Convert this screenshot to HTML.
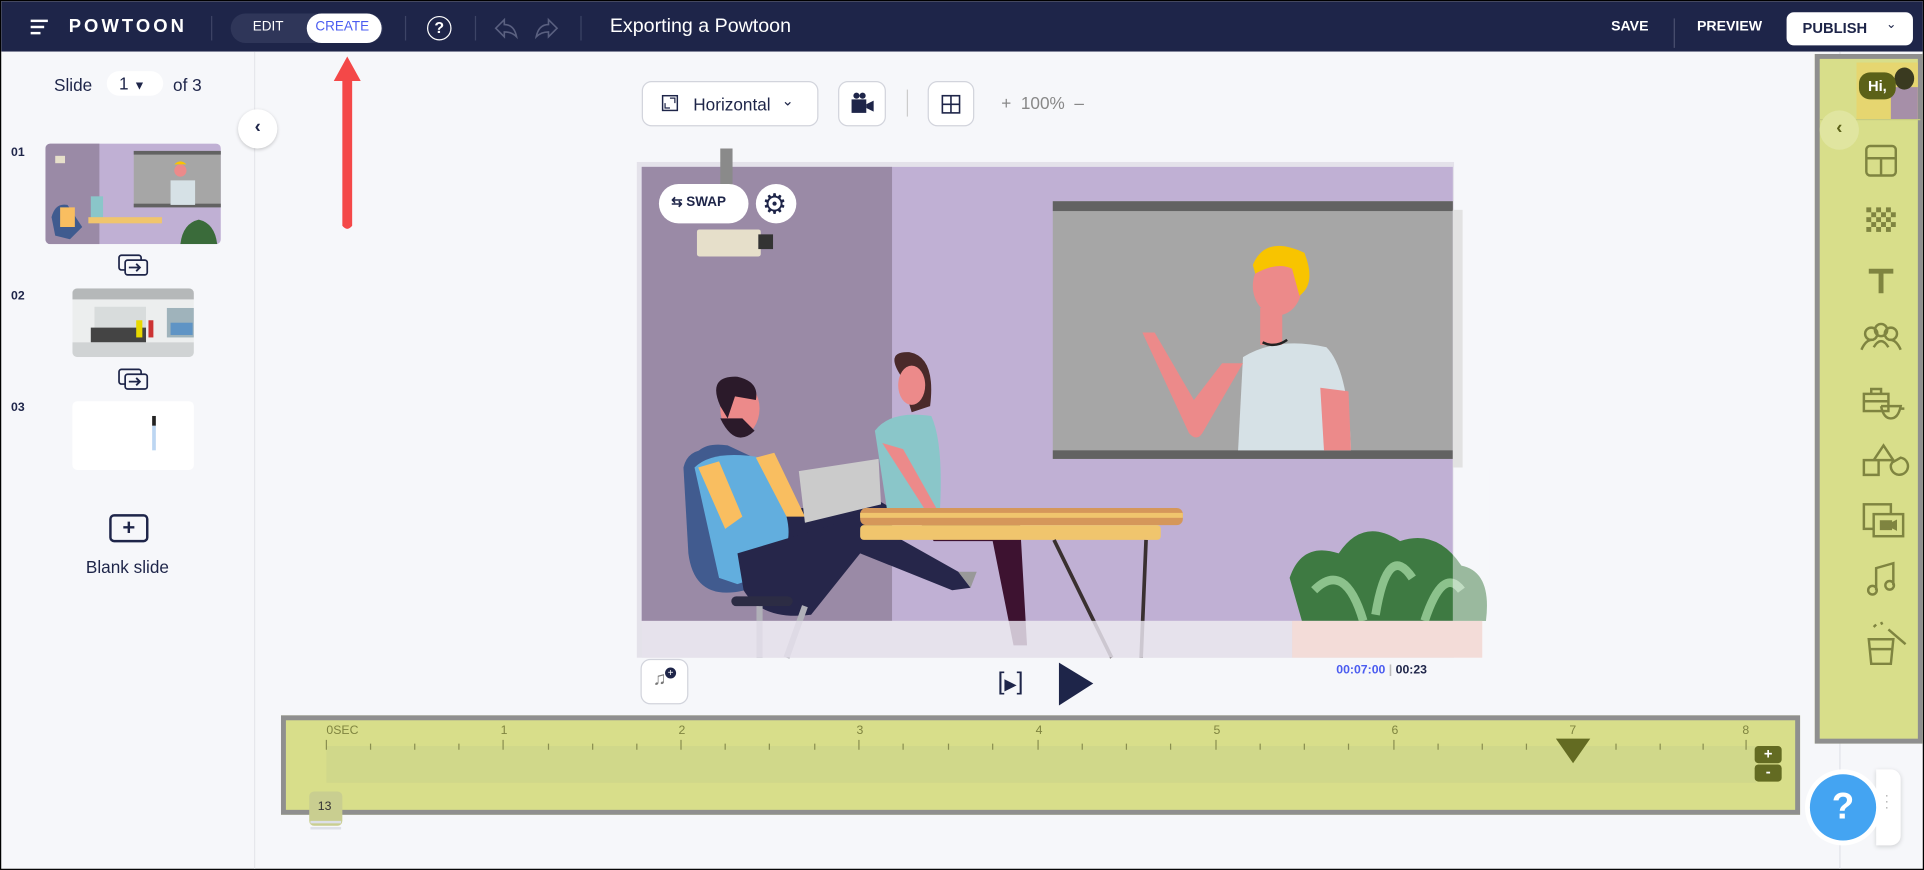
<!DOCTYPE html>
<html><head><meta charset="utf-8">
<style>
*{margin:0;padding:0;box-sizing:border-box}
html,body{width:1924px;height:870px;overflow:hidden;background:#000}
#w{position:absolute;left:0;top:0;width:1568px;height:709px;transform:scale(1.22704);transform-origin:0 0;background:#f6f7fa;font-family:"Liberation Sans",sans-serif;border:1.5px solid #000;overflow:hidden}
.a{position:absolute}
.hdr{left:0;top:0;width:1568px;height:41px;background:#1e2549;color:#fff}
.t{white-space:nowrap}
</style></head><body><div id="w">
<!-- header -->
<div class="a hdr">
 <div class="a" style="left:24px;top:15px;width:14px;height:2px;background:#fff"></div>
 <div class="a" style="left:24px;top:20px;width:11px;height:2px;background:#fff"></div>
 <div class="a" style="left:24px;top:25px;width:8px;height:2px;background:#fff"></div>
 <div class="a t" style="left:55px;top:12px;font-size:15px;font-weight:bold;letter-spacing:2.5px">POWTOON</div>
 <div class="a" style="left:171px;top:12px;width:1px;height:20px;background:#3d4466"></div>
 <div class="a" style="left:187px;top:10px;width:124px;height:24px;border-radius:12px;background:#2f3659"></div>
 <div class="a t" style="left:205px;top:15px;font-size:11px">EDIT</div>
 <div class="a" style="left:249px;top:10px;width:61px;height:24px;border-radius:12px;background:#fff"></div>
 <div class="a t" style="left:256px;top:15px;font-size:11px;color:#4b5cf0">CREATE</div>
 <div class="a" style="left:329px;top:12px;width:1px;height:20px;background:#3d4466"></div>
 <div class="a" style="left:347px;top:12px;width:20px;height:20px;border:1.7px solid #fff;border-radius:50%;text-align:center;font-size:13px;font-weight:bold;line-height:17px">?</div>
 <div class="a" style="left:386px;top:12px;width:1px;height:20px;background:#3d4466"></div>
 <svg class="a" style="left:400px;top:12px" width="60" height="20"><path d="M10 3 L3 10 L10 17 L10 13 Q16 13 20 17 Q18 7 10 7Z" fill="none" stroke="#5a6080" stroke-width="1.3"/><path d="M46 3 L53 10 L46 17 L46 13 Q40 13 36 17 Q38 7 46 7Z" fill="none" stroke="#5a6080" stroke-width="1.3"/></svg>
 <div class="a" style="left:472px;top:12px;width:1px;height:20px;background:#3d4466"></div>
 <div class="a t" style="left:496px;top:12px;font-size:16px">Exporting a Powtoon</div>
 <div class="a t" style="left:1312px;top:15px;font-size:11.5px;font-weight:bold">SAVE</div>
 <div class="a" style="left:1363px;top:14px;width:1px;height:24px;background:#4a5070"></div>
 <div class="a t" style="left:1382px;top:15px;font-size:11.5px;font-weight:bold">PREVIEW</div>
 <div class="a" style="left:1455px;top:9px;width:103px;height:27px;border-radius:6px;background:#fff"></div>
 <div class="a t" style="left:1468px;top:15px;font-size:12px;color:#1e2549;font-weight:bold">PUBLISH</div>
 <div class="a t" style="left:1536px;top:14px;font-size:10px;color:#1e2549">&#8964;</div>
</div>
<!-- red arrow -->
<svg class="a" style="left:266px;top:41px" width="32" height="150"><path d="M16 4 L5 24 L12 24 L12 142 Q16 147 20 142 L20 24 L27 24Z" fill="#f44848"/></svg>
<!-- left panel -->
<div class="a" style="left:206px;top:41px;width:1px;height:668px;background:#e6e7ec"></div>
<div class="a t" style="left:43px;top:60px;font-size:14px;color:#1e2549">Slide</div>
<div class="a" style="left:86px;top:57px;width:46px;height:20px;background:#fff;border-radius:10px"></div>
<div class="a t" style="left:96px;top:59px;font-size:14px;color:#1e2549">1 <span style="font-size:10px">&#9660;</span></div>
<div class="a t" style="left:140px;top:60px;font-size:14px;color:#1e2549">of 3</div>
<div class="a" style="left:193px;top:88px;width:32px;height:32px;border-radius:50%;background:#fff;box-shadow:0 1px 3px rgba(0,0,0,.2);text-align:center;line-height:30px;font-weight:bold;color:#1e2549;font-size:15px">&#8249;</div>
<div class="a t" style="left:8px;top:118px;font-size:10px;font-weight:bold;color:#1e2549">01</div>
<svg class="a" style="left:36px;top:116px;border-radius:4px" width="143" height="82" viewBox="0 0 143 82"><rect width="143" height="82" fill="#c0b0d4"/><rect width="44" height="82" fill="#9a8aa6"/><rect x="72" y="6" width="71" height="46" fill="#a6a6a6"/><rect x="72" y="6" width="71" height="3" fill="#626262"/><rect x="72" y="49" width="71" height="3" fill="#626262"/><rect x="102" y="30" width="20" height="20" fill="#d6e1e6"/><circle cx="110" cy="22" r="5" fill="#ec8a8a"/><path d="M105 17 Q110 12 115 17Z" fill="#f8c400"/><rect x="8" y="10" width="8" height="6" fill="#e6dfca"/><path d="M5 60 Q8 48 18 50 L30 68 L20 78 L8 75Z" fill="#3f5b8f"/><rect x="12" y="52" width="12" height="16" fill="#f9be60"/><rect x="37" y="43" width="10" height="18" fill="#8ac6c9"/><rect x="35" y="60" width="60" height="5" fill="#f0c56d"/><path d="M110 82 Q112 65 125 62 Q138 65 140 82Z" fill="#3a6b3a"/></svg>
<svg class="a" style="left:95px;top:206px" width="26" height="18"><rect x="1" y="1" width="18" height="12" rx="2" fill="none" stroke="#1e2549" stroke-width="1.4"/><rect x="6" y="5" width="18" height="12" rx="2" fill="#f6f7fa" stroke="#1e2549" stroke-width="1.4"/><path d="M9 11 H18 M15 8 L18 11 L15 14" stroke="#1e2549" stroke-width="1.5" fill="none"/></svg>
<div class="a t" style="left:8px;top:235px;font-size:10px;font-weight:bold;color:#1e2549">02</div>
<svg class="a" style="left:58px;top:234px;border-radius:4px" width="99" height="56" viewBox="0 0 99 56"><rect width="99" height="56" fill="#eceeee"/><rect width="99" height="9" fill="#b5b8b9"/><rect x="18" y="15" width="42" height="25" fill="#d8dcdc"/><rect x="77" y="16" width="22" height="24" fill="#9fb3bb"/><rect x="80" y="28" width="18" height="10" fill="#5f94c5"/><rect x="15" y="32" width="45" height="12" fill="#444"/><rect x="52" y="26" width="5" height="14" fill="#e8d900"/><rect x="62" y="26" width="4" height="14" fill="#c33"/><rect x="0" y="44" width="99" height="12" fill="#d0d3d4"/></svg>
<svg class="a" style="left:95px;top:299px" width="26" height="18"><rect x="1" y="1" width="18" height="12" rx="2" fill="none" stroke="#1e2549" stroke-width="1.4"/><rect x="6" y="5" width="18" height="12" rx="2" fill="#f6f7fa" stroke="#1e2549" stroke-width="1.4"/><path d="M9 11 H18 M15 8 L18 11 L15 14" stroke="#1e2549" stroke-width="1.5" fill="none"/></svg>
<div class="a t" style="left:8px;top:326px;font-size:10px;font-weight:bold;color:#1e2549">03</div>
<div class="a" style="left:58px;top:326px;width:99px;height:56px;background:#fff;border-radius:4px"></div>
<div class="a" style="left:123px;top:338px;width:3px;height:8px;background:#222"></div>
<div class="a" style="left:123px;top:346px;width:3px;height:20px;background:#bcd6f2"></div>
<div class="a" style="left:88px;top:418px;width:32px;height:23px;border:2px solid #1e2549;border-radius:4px;text-align:center;font-size:18px;font-weight:bold;line-height:18px;color:#1e2549">+</div>
<div class="a t" style="left:69px;top:453px;font-size:14px;color:#1e2549">Blank slide</div>
<!-- toolbar -->
<div class="a" style="left:522px;top:65px;width:144px;height:37px;border:1px solid #d2d4dc;border-radius:8px;background:#fff"></div>
<svg class="a" style="left:538px;top:76px" width="14" height="14"><rect x="1" y="1" width="12" height="12" fill="none" stroke="#1e2549" stroke-width="1.2"/><path d="M3 7 V11 H7 M11 7 V3 H7" stroke="#1e2549" fill="none"/></svg>
<div class="a t" style="left:564px;top:76px;font-size:14px;color:#1e2549">Horizontal</div>
<div class="a t" style="left:636px;top:74px;font-size:12px;color:#1e2549">&#8964;</div>
<div class="a" style="left:682px;top:65px;width:39px;height:37px;border:1px solid #d2d4dc;border-radius:8px;background:#fff"></div>
<svg class="a" style="left:692px;top:74px" width="20" height="18"><rect x="1" y="6" width="12" height="11" fill="#1e2549"/><path d="M13 10 L19 7 V16 L13 13Z" fill="#1e2549"/><circle cx="5" cy="3" r="2.5" fill="#1e2549"/><circle cx="10" cy="3" r="2.5" fill="#1e2549"/></svg>
<div class="a" style="left:738px;top:72px;width:1px;height:22px;background:#ccc"></div>
<div class="a" style="left:755px;top:65px;width:38px;height:37px;border:1px solid #d2d4dc;border-radius:8px;background:#fff"></div>
<svg class="a" style="left:766px;top:76px" width="16" height="16"><rect x="1" y="1" width="14" height="14" fill="none" stroke="#1e2549" stroke-width="1.3"/><path d="M8 1V15M1 8H15" stroke="#1e2549" stroke-width="1.3"/></svg>
<div class="a t" style="left:815px;top:75px;font-size:14px;color:#888">+ &nbsp;100% &nbsp;&#8211;</div>
<!-- canvas -->
<svg class="a" style="left:516px;top:120px" width="700" height="420" viewBox="516 120 700 420">
 <rect x="518" y="131" width="666" height="404" fill="#e4e2ea"/>
 <rect x="522" y="135" width="661" height="370" fill="#c0b0d4"/>
 <rect x="522" y="135" width="204" height="370" fill="#9a8aa6"/>
 <rect x="586" y="120" width="10" height="35" fill="#8a8a8a"/>
 <rect x="567" y="186" width="52" height="22" rx="2" fill="#e6dfca"/>
 <rect x="617" y="190" width="12" height="12" fill="#333"/>
 <rect x="857" y="163" width="326" height="210" fill="#a6a6a6"/>
 <rect x="857" y="163" width="326" height="8" fill="#626262"/>
 <rect x="857" y="366" width="326" height="7" fill="#626262"/>
 <rect x="1183" y="170" width="8" height="210" fill="#e2e2e2"/>
 <path d="M1008 366 L1012 290 Q1040 273 1080 282 Q1098 300 1100 366Z" fill="#d6e1e6"/>
 <path d="M1075 315 L1078 366 L1100 366 L1098 318Z" fill="#ec8a8a"/>
 <path d="M1012 295 L980 350 Q975 360 968 352 L930 270 L940 270 L972 325 L995 295Z" fill="#ec8a8a"/>
 <rect x="1026" y="250" width="18" height="30" fill="#ec8a8a"/>
 <ellipse cx="1040" cy="232" rx="20" ry="24" fill="#ec8a8a"/>
 <path d="M1020 215 Q1030 190 1062 205 Q1072 230 1058 240 L1052 218 Q1040 212 1022 222Z" fill="#f8c400"/>
 <path d="M1028 278 Q1038 283 1048 276" stroke="#222" stroke-width="2" fill="none"/>
 <path d="M604 420 L710 405 Q745 420 720 430 L630 478Z" fill="#26264a"/>
 <path d="M562 380 Q565 358 592 362 L620 375 L640 440 L620 470 Q590 480 580 470Z" fill="#405a8e"/>
 <path d="M556 380 Q560 362 585 366 L606 480 Q565 490 560 450Z" fill="#415b8f"/>
 <path d="M565 380 Q580 365 620 372 L640 420 Q650 460 600 475 L585 470Z" fill="#62aede"/>
 <path d="M568 380 L590 430 L604 420 L585 375Z M615 372 L640 420 L655 420 L630 368Z" fill="#f9be60"/>
 <path d="M600 450 L700 420 L780 465 L790 478 L775 480 L700 450 L660 500 Q620 505 605 480Z" fill="#26264a"/>
 <path d="M780 465 L795 465 L790 478Z" fill="#999"/>
 <rect x="595" y="485" width="50" height="8" rx="4" fill="#2c2c44"/>
 <path d="M618 493 L618 535 M655 493 L640 535" stroke="#b0b0b8" stroke-width="5"/>
 <path d="M650 383 L715 373 L717 410 L655 425Z" fill="#cbcbcb"/>
 <ellipse cx="602" cy="332" rx="16" ry="22" fill="#ec8a8a"/>
 <path d="M586 330 Q575 305 600 306 Q618 310 615 325 L598 322 L592 340Z" fill="#2b1a2a"/>
 <path d="M586 340 Q598 365 614 350 L604 340Z" fill="#2b1a2a"/>
 <path d="M733 305 Q720 285 740 286 Q762 290 757 330 L742 335Z" fill="#4a2a2a"/>
 <ellipse cx="742" cy="313" rx="11" ry="16" fill="#ec8a8a"/>
 <path d="M712 350 Q725 333 758 338 Q768 360 765 415 L722 415Z" fill="#8ac6c9"/>
 <path d="M718 360 L752 413 L762 413 L735 365Z" fill="#ec8a8a"/>
 <path d="M745 420 L830 420 L836 525 L825 525 L808 440 L760 440Z" fill="#3d1230"/>
 <rect x="700" y="413" width="263" height="14" rx="5" fill="#d5975a"/>
 <rect x="700" y="417" width="263" height="4" fill="#f0c56d"/>
 <rect x="700" y="427" width="245" height="12" rx="3" fill="#f0c56d"/>
 <path d="M858 439 L905 535 M933 439 L929 535" stroke="#3a3030" stroke-width="3"/>
 <path d="M1050 470 Q1060 440 1090 450 Q1110 420 1140 440 Q1170 430 1190 460 Q1215 465 1210 505 L1060 505Z" fill="#3e7a42"/>
 <path d="M1070 480 Q1095 455 1110 505 M1120 500 Q1130 440 1150 470 M1160 505 Q1175 460 1190 480" stroke="#8cc28c" stroke-width="7" fill="none"/>
 <rect x="1052" y="505" width="155" height="30" fill="#f3dcd8"/>
 <rect x="522" y="505" width="530" height="30" fill="#e6e2ec" opacity=".85"/>
 <rect x="1183" y="380" width="30" height="125" fill="#f6f7fa" opacity=".5"/>
</svg>
<!-- swap / gear -->
<div class="a" style="left:536px;top:149px;width:73px;height:32px;border-radius:16px;background:#fff"></div>
<div class="a t" style="left:546px;top:157px;font-size:11px;font-weight:bold;color:#1e2549">&#8646; SWAP</div>
<div class="a" style="left:615px;top:149px;width:33px;height:32px;border-radius:50%;background:#fff"></div>
<div class="a t" style="left:620px;top:150px;font-size:23px;color:#1e2549;line-height:30px">&#9881;</div>
<!-- bottom controls -->
<div class="a" style="left:521px;top:536px;width:39px;height:37px;border:1px solid #d2d4dc;border-radius:8px;background:#fff"></div>
<div class="a t" style="left:531px;top:544px;font-size:15px;color:#777">&#9835;</div>
<div class="a" style="left:541px;top:543px;width:9px;height:9px;border-radius:50%;background:#1e2549;color:#fff;font-size:8px;line-height:9px;text-align:center">+</div>
<div class="a t" style="left:812px;top:544px;font-size:20px;color:#1e2549">[<span style="font-size:13px">&#9654;</span>]</div>
<svg class="a" style="left:860px;top:538px" width="32" height="37"><path d="M2 1 L30 18 L2 36Z" fill="#1e2549"/></svg>
<div class="a t" style="left:1088px;top:540px;font-size:10px;font-weight:bold"><span style="color:#4b5cf0">00:07:00</span><span style="color:#bbb"> | </span><span style="color:#1e2549">00:23</span></div>
<!-- timeline -->
<div class="a" style="left:228px;top:582px;width:1238px;height:81px;background:#d8de8a;border:4px solid #8f8f8f"></div>
<div class="a" style="left:265px;top:607px;width:1165px;height:30px;background:#d0d88a"></div>
<svg class="a" style="left:232px;top:586px" width="1230" height="30">
 <g fill="#7f8440" font-family="Liberation Sans" font-size="10">
 <text x="33" y="11">0SEC</text><text x="175" y="11">1</text><text x="320" y="11">2</text><text x="465" y="11">3</text><text x="611" y="11">4</text><text x="756" y="11">5</text><text x="901" y="11">6</text><text x="1046" y="11">7</text><text x="1187" y="11">8</text></g>
 <g stroke="#8a8f50" stroke-width="1">
 <path d="M33 16V24M177 16V24M322 16V24M467 16V24M613 16V24M758 16V24M903 16V24M1048 16V24M1190 16V24"/>
 <path d="M69 19V24M105 19V24M141 19V24M214 19V24M250 19V24M286 19V24M358 19V24M394 19V24M431 19V24M503 19V24M540 19V24M576 19V24M649 19V24M685 19V24M721 19V24M794 19V24M830 19V24M866 19V24M939 19V24M975 19V24M1011 19V24M1084 19V24M1120 19V24M1155 19V24"/></g>
</svg>
<svg class="a" style="left:1266px;top:600px" width="30" height="22"><path d="M1 1 H29 L15 21Z" fill="#636b22"/></svg>
<div class="a" style="left:1429px;top:607px;width:22px;height:14px;border-radius:3px;background:#636b22;color:#fff;font-size:12px;line-height:13px;text-align:center;font-weight:bold">+</div>
<div class="a" style="left:1429px;top:622px;width:22px;height:14px;border-radius:3px;background:#636b22;color:#fff;font-size:12px;line-height:12px;text-align:center;font-weight:bold">-</div>
<div class="a" style="left:251px;top:644px;width:27px;height:28px;border-radius:4px;background:#c9ce90"></div>
<div class="a t" style="left:258px;top:651px;font-size:10px;color:#333">13</div>
<div class="a" style="left:252px;top:668px;width:25px;height:2px;background:#dde0e8"></div>
<div class="a" style="left:252px;top:673px;width:25px;height:2px;background:#dde0e8"></div>
<!-- right panel -->
<div class="a" style="left:1498px;top:41px;width:1px;height:668px;background:#e2e4ea"></div>
<div class="a" style="left:1478px;top:43px;width:88px;height:562px;background:#d8de8a;border:4px solid #8f8f8f"></div>
<div class="a" style="left:1512px;top:50px;width:50px;height:46px;background:#e6d670"></div>
<div class="a" style="left:1540px;top:70px;width:22px;height:26px;background:#a68fa8"></div>
<div class="a" style="left:1543px;top:54px;width:16px;height:18px;border-radius:50%;background:#3a3a20"></div>
<div class="a t" style="left:1514px;top:58px;width:30px;height:22px;border-radius:9px;background:#5b6118;color:#fff;font-size:12px;font-weight:bold;text-align:center;line-height:22px">Hi,</div>
<div class="a" style="left:1482px;top:96px;width:82px;height:1px;background:#c6cc80"></div>
<div class="a" style="left:1482px;top:89px;width:32px;height:32px;border-radius:50%;background:#e0e5a0;text-align:center;line-height:30px;font-weight:bold;color:#5b6118;font-size:15px">&#8249;</div>
<svg class="a" style="left:1508px;top:112px" width="50" height="430" fill="none" stroke="#7f8440" stroke-width="2">
 <rect x="12" y="6" width="24" height="24" rx="3"/><path d="M12 16H36M24 16V30"/>
 <g fill="#7f8440" stroke="none"><rect x="12" y="56" width="4" height="4"/><rect x="20" y="56" width="4" height="4"/><rect x="28" y="56" width="4" height="4"/><rect x="16" y="60" width="4" height="4"/><rect x="24" y="60" width="4" height="4"/><rect x="32" y="60" width="4" height="4"/><rect x="12" y="64" width="4" height="4"/><rect x="20" y="64" width="4" height="4"/><rect x="28" y="64" width="4" height="4"/><rect x="16" y="68" width="4" height="4"/><rect x="24" y="68" width="4" height="4"/><rect x="32" y="68" width="4" height="4"/><rect x="12" y="72" width="4" height="4"/><rect x="20" y="72" width="4" height="4"/><rect x="28" y="72" width="4" height="4"/></g>
 <path d="M14 108H34M24 108V126" stroke-width="4"/>
 <circle cx="16" cy="159" r="5"/><circle cx="24" cy="156" r="5"/><circle cx="32" cy="159" r="5"/><path d="M8 172Q12 163 18 164M18 170Q24 160 30 170M30 164Q36 163 40 172"/>
 <rect x="10" y="208" width="20" height="14"/><path d="M16 208V204H24V208M10 214H30M24 218H40Q38 228 32 228Q26 228 24 218M40 220H43"/>
 <path d="M10 262H22V274H10Z M18 262L26 250L34 262Z M32 266A7 7 0 1 0 40 260L33 264Z"/>
 <rect x="10" y="298" width="22" height="20"/><rect x="18" y="306" width="24" height="18" fill="#d8de8a"/><path d="M24 312H32V318H24ZM32 314L36 312V318L32 316" fill="#7f8440"/>
 <path d="M20 368V350L34 346V364"/><circle cx="17" cy="368" r="3.5"/><circle cx="31" cy="364" r="3.5"/>
 <path d="M14 408H34L32 428H16Z M14 416H34 M30 400L44 412 M18 398L20 396 M24 394L25 396"/>
</svg>
<!-- help -->
<div class="a" style="left:1528px;top:626px;width:20px;height:62px;background:#fff;border-radius:0 8px 8px 0;box-shadow:0 1px 4px rgba(0,0,0,.15)"></div>
<div class="a t" style="left:1535px;top:645px;font-size:10px;color:#999;line-height:5px">·<br>·<br>·</div>
<div class="a" style="left:1470px;top:626px;width:62px;height:62px;border-radius:50%;background:#fff"></div>
<div class="a" style="left:1474px;top:630px;width:54px;height:54px;border-radius:50%;background:#44a4f2;color:#fff;text-align:center;font-size:30px;font-weight:bold;line-height:54px">?</div>
</div></body></html>
